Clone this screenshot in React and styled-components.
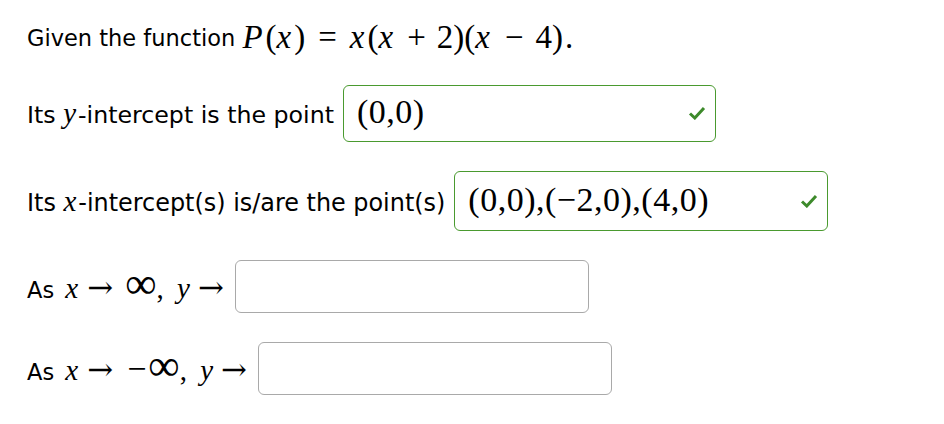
import React from 'react';
import styled, { createGlobalStyle } from 'styled-components';

const GlobalStyle = createGlobalStyle`
  html, body {
    margin: 0;
    padding: 0;
    background: #ffffff;
  }
  body {
    font-family: "DejaVu Sans", Verdana, sans-serif;
    color: #000000;
  }
`;

const Page = styled.div`
  display: flex;
  flex-direction: column;
  padding: 18px 0 0 27px;
  width: 944px;
  height: 424px;
  box-sizing: border-box;
`;

const Heading = styled.div`
  display: flex;
  align-items: center;
  height: 40px;
  margin-bottom: 27px;
  font-size: 22.5px;
  white-space: pre;
`;

const Row = styled.div`
  display: flex;
  align-items: center;
  height: ${(p) => p.$h}px;
  margin-bottom: 29px;
  font-size: ${(p) => p.$fs || 23.7}px;
  white-space: pre;
`;

const Label = styled.span`
  display: inline-flex;
  align-items: baseline;
  margin-right: ${(p) => p.$gap || 9}px;
`;

const M = styled.span`
  font-family: "Liberation Serif", "DejaVu Serif", serif;
  font-size: ${(p) => p.$size || 29}px;
  font-style: ${(p) => (p.$it ? 'italic' : 'normal')};
  margin-right: ${(p) => p.$mr || 0}px;
  margin-left: ${(p) => p.$ml || 0}px;
`;

const Op = styled.span`
  font-family: "Liberation Serif", "DejaVu Serif", serif;
  font-size: ${(p) => p.$size || 28}px;
  margin: 0 ${(p) => p.$space ?? 8}px;
`;

const Arrow = styled.span`
  font-family: "DejaVu Serif", serif;
  font-size: 31px;
  margin: 0 ${(p) => p.$r ?? 8}px 0 ${(p) => p.$l ?? 8}px;
`;

const Infinity = styled.span`
  font-family: "Liberation Serif", serif;
  font-size: 44px;
  line-height: 0.6;
`;

const AnswerBox = styled.div`
  display: flex;
  align-items: center;
  justify-content: space-between;
  box-sizing: border-box;
  width: ${(p) => p.$w}px;
  height: 100%;
  padding: 0 9px 0 13px;
  border: 1px solid ${(p) => (p.$ok ? '#4a9a2f' : '#a9a9a9')};
  border-radius: 6px;
  background: #fff;
`;

const BoxMath = styled.span`
  font-family: "Liberation Serif", "DejaVu Serif", serif;
  font-size: 34px;
  margin-top: -3px;
  letter-spacing: 0.5px;
`;

const Check = () => (
  <svg width="18" height="14" viewBox="0 0 18 14">
    <path d="M2 7.5 L6.8 12 L16 2" fill="none" stroke="#3d8a2b" strokeWidth="3" strokeLinejoin="miter" />
  </svg>
);

export default function App() {
  return (
    <>
      <GlobalStyle />
      <Page>
        <Heading>
          Given the function{' '}
          <M $it $size={33} $mr={3}>P</M>
          <M $size={33}>(</M>
          <M $it $size={33} $mr={3}>x</M>
          <M $size={33}>)</M>
          <Op $size={33} $space={13}>=</Op>
          <M $it $size={33} $mr={3}>x</M>
          <M $size={33}>(</M>
          <M $it $size={33} $mr={3}>x</M>
          <Op $size={33} $space={11}>+</Op>
          <M $size={33}>2)(</M>
          <M $it $size={33} $mr={3}>x</M>
          <Op $size={33} $space={12}>−</Op>
          <M $size={33} $mr={2}>4)</M>
          <M $size={33}>.</M>
        </Heading>

        <Row $h={58}>
          <Label>
            Its <M $it $mr={2}>y</M>-intercept is the point
          </Label>
          <AnswerBox $ok $w={373}>
            <BoxMath>(0,0)</BoxMath>
            <Check />
          </AnswerBox>
        </Row>

        <Row $h={60} $fs={23.9}>
          <Label>
            Its <M $it $mr={2}>x</M>-intercept(s) is/are the point(s)
          </Label>
          <AnswerBox $ok $w={374}>
            <BoxMath>(0,0),(−2,0),(4,0)</BoxMath>
            <Check />
          </AnswerBox>
        </Row>

        <Row $h={54} $fs={22.5}>
          <Label>
            As <M $it $ml={4}>x</M>
            <Arrow $l={9} $r={12}>→</Arrow>
            <Infinity>∞</Infinity>
            <M>, </M>
            <M $it $ml={6}>y</M>
            <Arrow $l={8} $r={2}>→</Arrow>
          </Label>
          <AnswerBox $w={354} />
        </Row>

        <Row $h={53} $fs={22.5}>
          <Label>
            As <M $it $ml={4}>x</M>
            <Arrow $l={9} $r={14}>→</Arrow>
            <M $size={34} $mr={2}>−</M>
            <Infinity>∞</Infinity>
            <M>, </M>
            <M $it $ml={6}>y</M>
            <Arrow $l={8} $r={2}>→</Arrow>
          </Label>
          <AnswerBox $w={354} />
        </Row>
      </Page>
    </>
  );
}
